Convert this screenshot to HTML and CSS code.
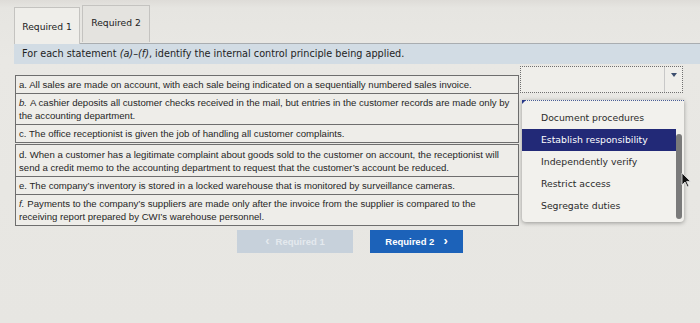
FILE: index.html
```html
<!DOCTYPE html>
<html>
<head>
<meta charset="utf-8">
<link rel="stylesheet" href="styles.css">
</head>
<body>
<div class="page">
  <div class="tabs">
    <div class="tab active">Required 1</div>
    <div class="tab">Required 2</div>
  </div>
  <div class="instructions">For each statement <i>(a)</i>–<i>(f)</i>, identify the internal control principle being applied.</div>
  <div class="table">
    <div class="cell stmt row-a">a. All sales are made on account, with each sale being indicated on a sequentially numbered sales invoice.</div>
    <div class="cell pick"><div class="select"><span class="arrow-box"><span class="caret"></span></span></div></div>
    <div class="cell stmt"><i class="lbl">b.</i>A cashier deposits all customer checks received in the mail, but entries in the customer records are made only by the accounting department.</div>
    <div class="cell pick"></div>
    <div class="cell stmt">c. The office receptionist is given the job of handling all customer complaints.</div>
    <div class="cell pick"></div>
    <div class="cell stmt row-d">d. When a customer has a legitimate complaint about goods sold to the customer on account, the receptionist will send a credit memo to the accounting department to request that the customer’s account be reduced.</div>
    <div class="cell pick"></div>
    <div class="cell stmt">e. The company’s inventory is stored in a locked warehouse that is monitored by surveillance cameras.</div>
    <div class="cell pick"></div>
    <div class="cell stmt"><i class="lbl">f.</i>Payments to the company’s suppliers are made only after the invoice from the supplier is compared to the receiving report prepared by CWI’s warehouse personnel.</div>
    <div class="cell pick"></div>
  </div>
  <div class="nav">
    <div class="btn prev"><span class="chev">&lsaquo;</span> Required 1</div>
    <div class="btn next">Required 2 <span class="chev">&rsaquo;</span></div>
  </div>

  <div class="popup">
    <span class="notch"></span>
    <div class="opt">Document procedures</div>
    <div class="opt sel">Establish responsibility</div>
    <div class="opt">Independently verify</div>
    <div class="opt">Restrict access</div>
    <div class="opt">Segregate duties</div>
    <span class="thumb"></span>
  </div>
  <svg class="cursor" width="10" height="16" viewBox="0 0 10 16"><path d="M1 1 L1 13 L4 10 L6.5 15 L8 14.3 L5.6 9.4 L9.5 9.4 Z" fill="#111" stroke="#eee" stroke-width="0.8"/></svg>
</div>
</body>
</html>
```
FILE: styles.css
```css
html, body {
  margin: 0;
  padding: 0;
}
body {
  background: #e8e7e3;
  width: 700px;
  height: 323px;
  overflow: hidden;
}
.page {
  position: relative;
  width: 700px;
  height: 323px;
  background: linear-gradient(#dedcd8 0, #e6e5e1 8px, #e9e8e4 60px, #e7e6e2 100%);
}
.tabs {
  display: flex;
  align-items: flex-end;
  gap: 2px;
  padding: 0 0 0 14px;
  height: 43px;
  box-sizing: border-box;
}
.tab {
  font-family: "DejaVu Sans", Verdana, sans-serif;
  font-size: 9.2px;
  color: #222;
  white-space: nowrap;
  border: 1px solid #c4c3c0;
  border-bottom: none;
  background: #e4e3df;
  height: 37px;
  box-sizing: border-box;
  padding: 13px 0 0 0;
  text-align: center;
  width: 68px;
}
.tab.active {
  background: #efeeea;
  height: 37px;
  width: 66px;
  padding-top: 13px;
  margin-bottom: -1px;
  position: relative;
}
.tab:not(.active) {
  height: 37px;
  padding-top: 11px;
  margin-bottom: 1px;
}
.instructions {
  margin-left: 14px;
  height: 21px;
  box-sizing: border-box;
  border-top: 1px solid #a9adb0;
  background: #d2dce4;
  font-family: "DejaVu Sans", Verdana, sans-serif;
  font-size: 9.7px;
  color: #1e1e1e;
  padding: 4px 0 0 8px;
  white-space: nowrap;
}
.table {
  display: grid;
  grid-template-columns: 504px 164px;
  margin: 2px 0 0 15px;
  width: 668px;
}
.cell {
  box-sizing: border-box;
}
.stmt {
  font-family: "Liberation Sans", Arial, sans-serif;
  font-size: 9.6px;
  line-height: 13px;
  color: #262626;
  background: #eeede9;
  border: 1px solid #6e6e6e;
  border-top: none;
  padding: 2px 3px 2px 3px;
}
.lbl {
  display: inline-block;
  margin-right: 3px;
}
.stmt.row-a {
  border-top: 1px solid #6e6e6e;
  margin-top: 9px;
  padding-top: 2px;
}
.stmt.row-d {
  margin-top: 1px;
  border-top: 1px solid #6e6e6e;
  padding: 3px 3px 2px 3px;
}
.pick {
  background: transparent;
}
.select {
  margin-left: 1px;
  height: 27px;
  border: 1px dotted #6f6f6f;
  background: #efeeea;
  box-sizing: border-box;
  display: flex;
  justify-content: flex-end;
}
.arrow-box {
  width: 18px;
  border-left: 1px solid #c8c8c8;
  display: flex;
  justify-content: center;
  padding-top: 6px;
  box-sizing: border-box;
}
.caret {
  width: 0;
  height: 0;
  border-left: 3.5px solid transparent;
  border-right: 3.5px solid transparent;
  border-top: 4px solid #3c4e6e;
}
.nav {
  display: flex;
  justify-content: center;
  gap: 17px;
  margin-top: 4px;
}
.btn {
  height: 23px;
  box-sizing: border-box;
  font-family: "Liberation Sans", Arial, sans-serif;
  font-weight: bold;
  font-size: 9.5px;
  display: flex;
  align-items: center;
  justify-content: center;
  gap: 6px;
}
.btn .chev {
  font-size: 13px;
  font-weight: bold;
  margin-top: -2px;
}
.btn.prev {
  width: 116px;
  background: #c7d1db;
  color: #e4e9ee;
}
.btn.next {
  width: 93px;
  background: #1c62b9;
  color: #ffffff;
  gap: 9px;
}
.popup {
  position: absolute;
  left: 522px;
  top: 100px;
  width: 162px;
  height: 122px;
  box-sizing: border-box;
  background: #f2f1ed;
  border-top: 1px dotted #4a5e96;
  border-radius: 0 0 4px 4px;
  box-shadow: 0 1px 4px rgba(0,0,0,0.35);
  padding-top: 6px;
  font-family: "DejaVu Sans", Verdana, sans-serif;
  font-size: 9.3px;
  color: #2b2b2b;
}
.notch {
  position: absolute;
  left: 0;
  top: -1px;
  width: 0;
  height: 0;
  border-top: 4px solid #2a3a8a;
  border-right: 4px solid transparent;
}
.opt {
  height: 22px;
  line-height: 22px;
  padding-left: 19px;
  margin-right: 8px;
}
.opt.sel {
  background: #222977;
  color: #ffffff;
}
.thumb {
  position: absolute;
  right: 2px;
  top: 33px;
  width: 6px;
  height: 85px;
  border-radius: 3px;
  background: #7a7a7a;
}
.cursor {
  position: absolute;
  left: 681px;
  top: 172px;
}
```
